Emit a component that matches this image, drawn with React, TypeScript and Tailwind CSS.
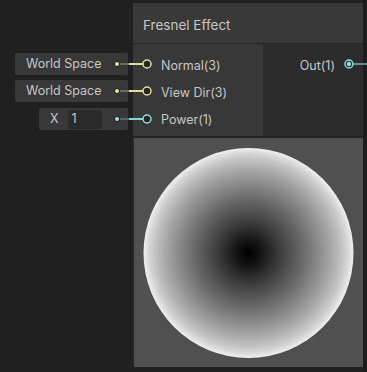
import React from 'react';

const font = "font-['Inter','Noto_Sans',sans-serif]";

function PropBox({ top, left, children }: { top: number; left: number; children: React.ReactNode }) {
  return (
    <div
      className="absolute flex items-center h-[22px] bg-[#383838] rounded-[2px]"
      style={{ top, left, width: 128 - left }}
    >
      {children}
    </div>
  );
}

function Port({ label }: { label: string }) {
  return (
    <div className="h-[27px] flex items-center pl-[28px] pt-[5px] text-[12.5px] text-[#c6c6c6]">{label}</div>
  );
}

// fresnel falloff, sRGB grey per radius step
const stops = [0, 16, 39, 61, 82, 102, 124, 146, 170, 198, 216, 240];
const offs = [0, 0.1, 0.2, 0.3, 0.4, 0.5, 0.6, 0.7, 0.8, 0.9, 0.95, 1];

export default function App() {
  return (
    <div className={`relative w-[367px] h-[372px] bg-[#202020] overflow-hidden ${font}`}>
      {/* inline property inputs */}
      <PropBox top={53} left={15}>
        <span className="pl-[11px] text-[12.5px] text-[#c6c6c6]">World Space</span>
      </PropBox>
      <PropBox top={80} left={15}>
        <span className="pl-[11px] text-[12.5px] text-[#c6c6c6]">World Space</span>
      </PropBox>
      <PropBox top={108} left={39}>
        <span className="pl-[11px] text-[12.5px] text-[#c6c6c6]">X</span>
        <div className="ml-[9px] w-[34px] h-[19px] bg-[#2a2a2a] rounded-[3px] flex items-center pl-[4px] text-[12.5px] text-[#c6c6c6]">
          1
        </div>
      </PropBox>

      {/* node */}
      <div className="absolute left-[133px] top-[3px] w-[230px] bg-[#2b2b2b] flex flex-col">
        <div className="h-[41px] bg-[#393939] border-b border-[#252525] flex items-center pl-[10px] pt-[5px] text-[13.5px] text-[#c6c6c6]">
          Fresnel Effect
        </div>
        <div className="flex border-b-2 border-[#232323]">
          <div className="w-[130px] bg-[#383838] pt-[6px] pb-[5px]">
            <Port label="Normal(3)" />
            <Port label="View Dir(3)" />
            <Port label="Power(1)" />
          </div>
          <div className="flex-1 bg-[#2c2c2c] pt-[6px]">
            <div className="h-[27px] flex items-center justify-end pr-[28px] pt-[5px] text-[12.5px] text-[#c6c6c6]">Out(1)</div>
          </div>
        </div>
        <div className="h-[229px] bg-[#505050] border-l border-[#2a2a2a]">
          <svg width="229" height="229" viewBox="0 0 229 229">
            <defs>
              <radialGradient id="fres" cx="0.5" cy="0.5" r="0.5">
                {stops.map((g, i) => (
                  <stop key={i} offset={offs[i]} stopColor={`rgb(${g},${g},${g})`} />
                ))}
              </radialGradient>
            </defs>
            <circle cx="114.5" cy="115" r="105" fill="url(#fres)" />
          </svg>
        </div>
      </div>
      <div className="absolute left-[363px] top-0 w-[4px] h-[372px] bg-[#1c1c1c]" />

      {/* wires and ports */}
      <svg className="absolute inset-0 pointer-events-none" width="367" height="372">
        {[64, 91].map(y => (
          <g key={y}>
            <line x1="119" y1={y} x2="129" y2={y} stroke="#6a6a58" strokeWidth="2" />
            <line x1="129" y1={y} x2="143" y2={y} stroke="#dede98" strokeWidth="2" />
            <circle cx="117" cy={y} r="3" fill="#262626" />
            <circle cx="117" cy={y} r="2" fill="#e2e29c" />
            <circle cx="147" cy={y} r="4" fill="#262626" stroke="#e2e29c" strokeWidth="1.5" />
          </g>
        ))}
        <line x1="119" y1="119" x2="129" y2="119" stroke="#4f6a6b" strokeWidth="2" />
        <line x1="129" y1="119" x2="143" y2="119" stroke="#7fd6da" strokeWidth="2" />
        <circle cx="117" cy="119" r="3" fill="#262626" />
        <circle cx="117" cy="119" r="2" fill="#9fdfe2" />
        <circle cx="147" cy="119" r="4" fill="#262626" stroke="#8ddde0" strokeWidth="1.5" />

        <line x1="353" y1="64" x2="367" y2="64" stroke="#5f8f91" strokeWidth="2" />
        <circle cx="349" cy="64" r="4" fill="#262626" stroke="#8ddde0" strokeWidth="1.5" />
        <circle cx="349" cy="64" r="2.2" fill="#8ddde0" />
      </svg>
    </div>
  );
}
